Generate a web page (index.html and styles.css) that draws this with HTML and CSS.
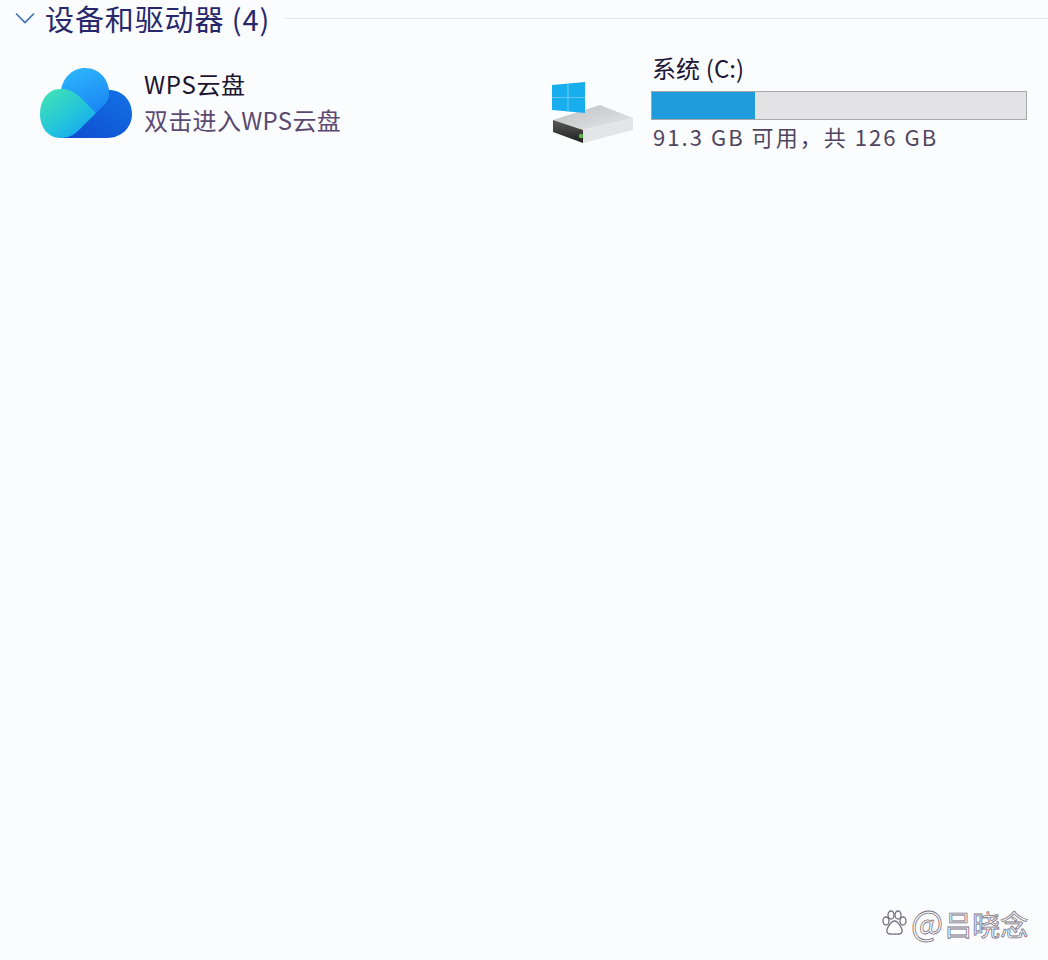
FILE: index.html
```html
<!DOCTYPE html>
<html lang="zh-CN">
<head>
    <meta charset="UTF-8">
    <title>设备和驱动器</title>
    <link rel="stylesheet" href="styles.css">
</head>
<body>
<div class="page">
    <div class="group-head">
        <svg class="chevron" width="20" height="12" viewBox="0 0 20 12">
            <path d="M1 1.500L10 10.500L19 1.500" fill="none" stroke="#3d6fb0" stroke-width="1.6"/>
        </svg>
        <span class="group-title">设备和驱动器 (4)</span>
        <div class="group-line"></div>
    </div>
    <div class="items">
        <div class="item item-wps">
            <svg class="cloud" width="94" height="72" viewBox="0 0 94 72">
                <defs>
                    <linearGradient id="cloudTop" x1="0.3" y1="0" x2="0.7" y2="1">
                        <stop offset="0" stop-color="#2cb4fb"/>
                        <stop offset="1" stop-color="#1a86f4"/>
                    </linearGradient>
                    <linearGradient id="cloudRight" x1="0.8" y1="0" x2="0.2" y2="1">
                        <stop offset="0" stop-color="#1478ea"/>
                        <stop offset="1" stop-color="#0f4fd0"/>
                    </linearGradient>
                    <linearGradient id="cloudLeft" x1="0.1" y1="0.1" x2="0.8" y2="0.9">
                        <stop offset="0" stop-color="#3fe0b8"/>
                        <stop offset="0.6" stop-color="#22c4dc"/>
                        <stop offset="1" stop-color="#1aa8f0"/>
                    </linearGradient>
                </defs>
                <path d="M21 71H68C83 71 93 60 93 47C93 33 83 23 70 23C66 9 57 2 47 2C36 2 28 9 23 22L40 60Z" fill="url(#cloudRight)"/>
                <path d="M22 23C24 10 34 1 46 1C60 1 70 12 70 26C70 30 69 33 67 36L57 46Z" fill="url(#cloudTop)"/>
                <path d="M21 22C30 22 36 25 42 31L57 46L40 63C34 69 28 71 21 71C9 71 1 60 1 47C1 33 9 22 21 22Z" fill="url(#cloudLeft)"/>
            </svg>
            <div class="item-text">
                <div class="item-name">WPS云盘</div>
                <div class="item-sub">双击进入WPS云盘</div>
            </div>
        </div>
        <div class="item item-drive">
            <svg class="drive" width="86" height="66" viewBox="0 0 86 66">
                <defs>
                    <linearGradient id="driveTop" x1="0" y1="0" x2="1" y2="1">
                        <stop offset="0" stop-color="#bfc0c3"/>
                        <stop offset="1" stop-color="#e6e6e8"/>
                    </linearGradient>
                    <linearGradient id="driveFace" x1="0" y1="0" x2="0" y2="1">
                        <stop offset="0" stop-color="#5a5a58"/>
                        <stop offset="1" stop-color="#1f1f1f"/>
                    </linearGradient>
                </defs>
                <path d="M3 40L50 25L83 38L33 50Z" fill="url(#driveTop)"/>
                <path d="M3 40L33 50V63L3 52Z" fill="url(#driveFace)"/>
                <path d="M33 50L83 38V50L33 63Z" fill="#e4e5e7"/>
                <circle cx="31" cy="56" r="2.200" fill="#58b84c"/>
                <path d="M2 5L35 2V33L2 30Z" fill="#18aeee"/>
                <path d="M18 4V32M2 17.500L35 17.500" stroke="#62c8f2" stroke-width="1.200"/>
            </svg>
            <div class="item-text">
                <div class="drive-name">系统 (C:)</div>
                <div class="bar"><div class="bar-used"></div></div>
                <div class="drive-sub">91.3 GB 可用，共 126 GB</div>
            </div>
        </div>
    </div>
</div>
<div class="mark">
    <svg width="26" height="26" viewBox="0 0 26 26">
        <g fill="#fff" stroke="#77707f" stroke-width="1.3">
            <ellipse cx="5" cy="11" rx="3" ry="4"/>
            <ellipse cx="10" cy="5" rx="3" ry="4"/>
            <ellipse cx="17" cy="5" rx="3" ry="4"/>
            <ellipse cx="22" cy="11" rx="3" ry="4"/>
            <path d="M13.500 11C17 11 22 19 21 22C20 25 16 24 13.500 24C11 24 7 25 6 22C5 19 10 11 13.500 11Z"/>
        </g>
    </svg>
    <span class="mark-text"><span class="mark-at">@</span>吕晓念</span>
</div>
</body>
</html>
```

FILE: styles.css
```css
* {
    margin: 0;
    padding: 0;
    box-sizing: border-box;
}
body {
    background: #fbfcfe;
    font-family: "Noto Sans CJK SC", "Noto Sans", sans-serif;
    height: 960px;
    overflow: hidden;
    position: relative;
}
.group-head {
    display: flex;
    align-items: center;
    height: 36px;
    padding-left: 15px;
}
.chevron {
    flex: none;
}
.group-title {
    margin-left: 10px;
    font-size: 29px;
    line-height: 36px;
    letter-spacing: 0.9px;
    color: #27276b;
    white-space: nowrap;
}
.group-line {
    flex: 1;
    height: 1px;
    margin-left: 15px;
    background: #dfe6f0;
}
.items {
    display: grid;
    grid-template-columns: 510px 1fr;
    padding-left: 40px;
    padding-right: 21px;
}
.item {
    display: flex;
}
.item-wps {
    padding-top: 31px;
}
.cloud {
    flex: none;
    margin-left: -1px;
    margin-right: 11px;
    filter: blur(0.5px);
}
.item-wps .item-text {
    padding-top: 1px;
}
.item-name {
    font-size: 24px;
    line-height: 32px;
    letter-spacing: 0.7px;
    color: #1a1430;
}
.item-sub {
    margin-top: 4px;
    font-size: 24px;
    line-height: 32px;
    letter-spacing: 0.3px;
    color: #5b4a70;
}
.item-drive {
    padding-top: 17px;
}
.drive {
    flex: none;
    margin-top: 27px;
    margin-right: 15px;
    filter: blur(0.5px);
}
.item-drive .item-text {
    flex: 1;
}
.drive-name {
    margin-left: 1px;
    font-size: 24px;
    line-height: 30px;
    letter-spacing: 0.1px;
    color: #1e1636;
}
.bar {
    height: 29px;
    margin-top: 8px;
    background: #e3e3e6;
    border: 1px solid #a6a8ab;
}
.bar-used {
    width: 27.6%;
    height: 100%;
    background: #1e9cdc;
}
.drive-sub {
    margin-left: 2px;
    font-size: 22px;
    line-height: 32px;
    letter-spacing: 2.05px;
    color: #4f4560;
}
.mark {
    position: absolute;
    left: 881px;
    top: 905px;
    display: flex;
    align-items: center;
    gap: 4px;
    height: 36px;
}
.mark-text {
    font-size: 28px;
    line-height: 36px;
    color: #fff;
    -webkit-text-stroke: 0.8px #77707f;
    white-space: nowrap;
}
.mark-at {
    font-size: 34px;
    margin-right: 1px;
}
```
